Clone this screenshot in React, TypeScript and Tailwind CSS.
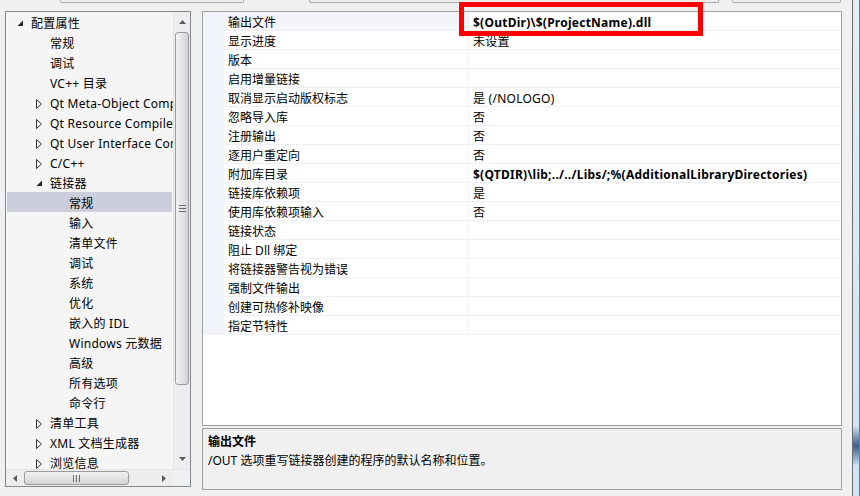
import React from "react";

type TreeItem = { label: string; level: number; arrow?: "open" | "closed"; selected?: boolean };

const treeItems: TreeItem[] = [
  { label: "配置属性", level: 0, arrow: "open" },
  { label: "常规", level: 1 },
  { label: "调试", level: 1 },
  { label: "VC++ 目录", level: 1 },
  { label: "Qt Meta-Object Compiler", level: 1, arrow: "closed" },
  { label: "Qt Resource Compiler", level: 1, arrow: "closed" },
  { label: "Qt User Interface Compiler", level: 1, arrow: "closed" },
  { label: "C/C++", level: 1, arrow: "closed" },
  { label: "链接器", level: 1, arrow: "open" },
  { label: "常规", level: 2, selected: true },
  { label: "输入", level: 2 },
  { label: "清单文件", level: 2 },
  { label: "调试", level: 2 },
  { label: "系统", level: 2 },
  { label: "优化", level: 2 },
  { label: "嵌入的 IDL", level: 2 },
  { label: "Windows 元数据", level: 2 },
  { label: "高级", level: 2 },
  { label: "所有选项", level: 2 },
  { label: "命令行", level: 2 },
  { label: "清单工具", level: 1, arrow: "closed" },
  { label: "XML 文档生成器", level: 1, arrow: "closed" },
  { label: "浏览信息", level: 1, arrow: "closed" },
];

type Prop = { name: string; value?: string; bold?: boolean; active?: boolean };

const props: Prop[] = [
  { name: "输出文件", value: "$(OutDir)\\$(ProjectName).dll", bold: true, active: true },
  { name: "显示进度", value: "未设置" },
  { name: "版本" },
  { name: "启用增量链接" },
  { name: "取消显示启动版权标志", value: "是 (/NOLOGO)" },
  { name: "忽略导入库", value: "否" },
  { name: "注册输出", value: "否" },
  { name: "逐用户重定向", value: "否" },
  { name: "附加库目录", value: "$(QTDIR)\\lib;../../Libs/;%(AdditionalLibraryDirectories)", bold: true },
  { name: "链接库依赖项", value: "是" },
  { name: "使用库依赖项输入", value: "否" },
  { name: "链接状态" },
  { name: "阻止 Dll 绑定" },
  { name: "将链接器警告视为错误" },
  { name: "强制文件输出" },
  { name: "创建可热修补映像" },
  { name: "指定节特性" },
];

const indent = ["pl-[25px]", "pl-[44px]", "pl-[63px]"];
const arrowPos = ["left-[11px]", "left-[30px]", "left-[49px]"];

const Arrow = ({ kind }: { kind: "open" | "closed" }) =>
  kind === "open" ? (
    <svg width="7" height="7" viewBox="0 0 7 7">
      <path d="M6 0.5 L6 6 L0.5 6 Z" fill="#262626" />
    </svg>
  ) : (
    <svg width="6" height="10" viewBox="0 0 6 10">
      <path d="M0.5 0.5 L5.5 5 L0.5 9.5 Z" fill="none" stroke="#333" strokeWidth="1" />
    </svg>
  );

const TreeRow = ({ item }: { item: TreeItem }) => (
  <div
    className={`relative h-[20px] pt-[3px] flex items-center whitespace-nowrap tracking-[0.25px] ${indent[item.level]} ${
      item.selected ? "bg-[#cccedb] mx-[1px]" : ""
    }`}
  >
    {item.arrow && (
      <span className={`absolute top-0 h-[20px] pt-[3px] flex items-center ${arrowPos[item.level]}`}>
        <Arrow kind={item.arrow} />
      </span>
    )}
    <span className={item.selected ? "-ml-[1px]" : ""}>{item.label}</span>
  </div>
);

const VScroll = () => (
  <div className="w-[17px] flex flex-col bg-[#ededed] border-l border-[#e6e6e6]">
    <div className="h-[20px] flex items-center justify-center">
      <svg width="7" height="4" viewBox="0 0 7 4">
        <path d="M0 4 L3.5 0 L7 4 Z" fill="#5a5a5a" />
      </svg>
    </div>
    <div className="mx-[1px] h-[353px] rounded-[3px] border border-[#9c9c9c] bg-gradient-to-r from-[#f2f2f2] via-[#e4e4e4] to-[#d2d2d2] flex items-center justify-center">
      <div className="flex flex-col gap-[2px]">
        <div className="w-[7px] h-[1px] bg-[#6a6a6a]" />
        <div className="w-[7px] h-[1px] bg-[#6a6a6a]" />
        <div className="w-[7px] h-[1px] bg-[#6a6a6a]" />
      </div>
    </div>
    <div className="flex-1" />
    <div className="h-[20px] flex items-center justify-center">
      <svg width="7" height="4" viewBox="0 0 7 4">
        <path d="M0 0 L3.5 4 L7 0 Z" fill="#5a5a5a" />
      </svg>
    </div>
  </div>
);

const HScroll = () => (
  <div className="h-[17px] flex bg-[#ededed] border-t border-[#e6e6e6]">
    <div className="w-[18px] flex items-center justify-center">
      <svg width="4" height="7" viewBox="0 0 4 7">
        <path d="M4 0 L0 3.5 L4 7 Z" fill="#5a5a5a" />
      </svg>
    </div>
    <div className="my-[1px] w-[105px] rounded-[3px] border border-[#9c9c9c] bg-gradient-to-b from-[#f2f2f2] via-[#e4e4e4] to-[#d2d2d2] flex items-center justify-center">
      <div className="flex gap-[2px]">
        <div className="w-[1px] h-[7px] bg-[#6a6a6a]" />
        <div className="w-[1px] h-[7px] bg-[#6a6a6a]" />
        <div className="w-[1px] h-[7px] bg-[#6a6a6a]" />
      </div>
    </div>
    <div className="flex-1" />
    <div className="w-[18px] flex items-center justify-center">
      <svg width="4" height="7" viewBox="0 0 4 7">
        <path d="M0 0 L4 3.5 L0 7 Z" fill="#5a5a5a" />
      </svg>
    </div>
    <div className="w-[17px] bg-[#f0f0f0]" />
  </div>
);

export default function App() {
  return (
    <div className="w-[860px] h-[496px] bg-[#f0f0f0] flex overflow-hidden text-[12px] text-black font-['Segoe_UI','Noto_Sans','Noto_Sans_CJK_SC',sans-serif]">
      <div className="relative flex-1 flex flex-col">
        {/* bottoms of the combo boxes above */}
        <div className="h-[11px] flex items-start">
          <div className="ml-[60px] w-[184px] h-[3px] border-x border-b border-[#acacac] rounded-b-[2px] bg-[#ececec]" />
          <div className="ml-[65px] w-[410px] h-[3px] border-x border-b border-[#acacac] rounded-b-[2px] bg-[#ececec]" />
          <div className="ml-[13px] w-[109px] h-[3px] border-x border-b border-[#acacac] rounded-b-[2px] bg-[#ececec]" />
        </div>

        <div className="flex">
          {/* tree */}
          <div className="ml-[5px] w-[186px] h-[476px] border border-[#828790] bg-[#f5f5f5] flex flex-col">
            <div className="flex flex-1 min-h-0">
              <div className="flex-1 overflow-hidden">
                {treeItems.map((it, i) => (
                  <TreeRow key={i} item={it} />
                ))}
              </div>
              <VScroll />
            </div>
            <HScroll />
          </div>

          {/* right side */}
          <div className="ml-[11px] w-[640px] flex flex-col">
            <div className="h-[415px] border border-[#a0a0a0] bg-white">
              {props.map((p, i) => (
                <div key={i} className="flex h-[19px]">
                  <div className="w-[21px] bg-[#f0f4fa]" />
                  <div
                    className={`w-[245px] pl-[4px] pt-[3px] flex items-center border-b border-r border-[#edf0f6] whitespace-nowrap ${
                      p.active ? "bg-[#f3f5fa]" : ""
                    }`}
                  >
                    {p.name}
                  </div>
                  <div
                    className={`flex-1 pl-[4px] pt-[3px] flex items-center border-b border-[#edf0f6] whitespace-nowrap tracking-[0.25px] ${
                      p.bold ? "font-bold" : ""
                    }`}
                  >
                    {p.value}
                  </div>
                </div>
              ))}
            </div>
            <div className="mt-[2px] h-[62px] border border-[#a0a0a0] bg-[#f0f0f0] pl-[5px] pt-[3px] leading-[19px]">
              <div className="font-bold">输出文件</div>
              <div>/OUT 选项重写链接器创建的程序的默认名称和位置。</div>
            </div>
          </div>
        </div>

        {/* highlight box drawn over the grid */}
        <div className="absolute left-[459px] top-[2px] w-[244px] h-[34px] border-[5px] border-[#ff0000]" />
      </div>

      {/* window frame edge */}
      <div className="w-[8px] border-l border-[#6b6b6b] border-r border-r-[#7a7a7a] bg-gradient-to-b from-[#e4eef6] via-[#dbe8f2] to-[#cfe3f2] flex flex-col">
        <div className="flex-1" />
        <div className="h-[40px] mb-[30px] bg-gradient-to-b from-[#cfe3f2] via-[#3f5f8f] to-[#cfe6f6]" />
      </div>
    </div>
  );
}
